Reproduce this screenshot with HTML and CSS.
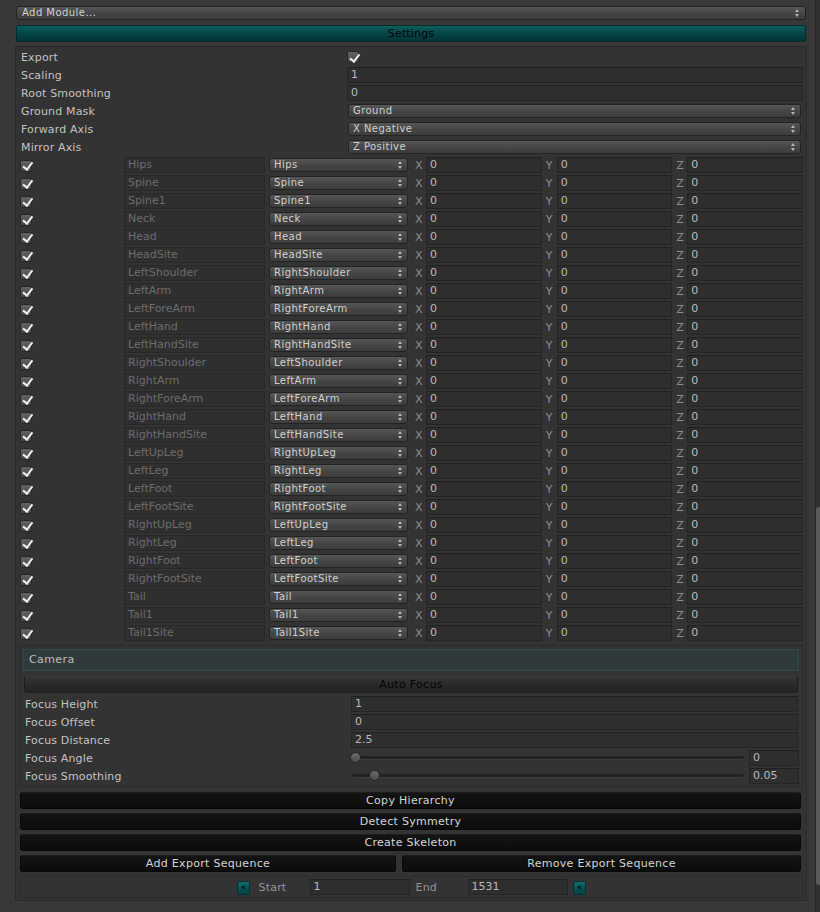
FILE: index.html
```html
<!DOCTYPE html>
<html>
<head>
<meta charset="utf-8">
<link rel="stylesheet" href="styles.css">
</head>
<body>
<div class="window">
  <div class="main">
    <div class="dd top">Add Module...</div>
    <div class="header">Settings</div>
    <div class="panel">
      <div class="prow"><span class="plabel">Export</span><span class="cb"></span></div>
      <div class="prow"><span class="plabel">Scaling</span><span class="field">1</span></div>
      <div class="prow"><span class="plabel">Root Smoothing</span><span class="field">0</span></div>
      <div class="prow"><span class="plabel">Ground Mask</span><span class="dd wide">Ground</span></div>
      <div class="prow"><span class="plabel">Forward Axis</span><span class="dd wide">X Negative</span></div>
      <div class="prow"><span class="plabel">Mirror Axis</span><span class="dd wide">Z Positive</span></div>

      <div class="brow"><span class="cb"></span><span class="name">Hips</span><span class="dd sm">Hips</span><span class="axis x">X</span><span class="field">0</span><span class="axis">Y</span><span class="field">0</span><span class="axis">Z</span><span class="field">0</span></div>
      <div class="brow"><span class="cb"></span><span class="name">Spine</span><span class="dd sm">Spine</span><span class="axis x">X</span><span class="field">0</span><span class="axis">Y</span><span class="field">0</span><span class="axis">Z</span><span class="field">0</span></div>
      <div class="brow"><span class="cb"></span><span class="name">Spine1</span><span class="dd sm">Spine1</span><span class="axis x">X</span><span class="field">0</span><span class="axis">Y</span><span class="field">0</span><span class="axis">Z</span><span class="field">0</span></div>
      <div class="brow"><span class="cb"></span><span class="name">Neck</span><span class="dd sm">Neck</span><span class="axis x">X</span><span class="field">0</span><span class="axis">Y</span><span class="field">0</span><span class="axis">Z</span><span class="field">0</span></div>
      <div class="brow"><span class="cb"></span><span class="name">Head</span><span class="dd sm">Head</span><span class="axis x">X</span><span class="field">0</span><span class="axis">Y</span><span class="field">0</span><span class="axis">Z</span><span class="field">0</span></div>
      <div class="brow"><span class="cb"></span><span class="name">HeadSite</span><span class="dd sm">HeadSite</span><span class="axis x">X</span><span class="field">0</span><span class="axis">Y</span><span class="field">0</span><span class="axis">Z</span><span class="field">0</span></div>
      <div class="brow"><span class="cb"></span><span class="name">LeftShoulder</span><span class="dd sm">RightShoulder</span><span class="axis x">X</span><span class="field">0</span><span class="axis">Y</span><span class="field">0</span><span class="axis">Z</span><span class="field">0</span></div>
      <div class="brow"><span class="cb"></span><span class="name">LeftArm</span><span class="dd sm">RightArm</span><span class="axis x">X</span><span class="field">0</span><span class="axis">Y</span><span class="field">0</span><span class="axis">Z</span><span class="field">0</span></div>
      <div class="brow"><span class="cb"></span><span class="name">LeftForeArm</span><span class="dd sm">RightForeArm</span><span class="axis x">X</span><span class="field">0</span><span class="axis">Y</span><span class="field">0</span><span class="axis">Z</span><span class="field">0</span></div>
      <div class="brow"><span class="cb"></span><span class="name">LeftHand</span><span class="dd sm">RightHand</span><span class="axis x">X</span><span class="field">0</span><span class="axis">Y</span><span class="field">0</span><span class="axis">Z</span><span class="field">0</span></div>
      <div class="brow"><span class="cb"></span><span class="name">LeftHandSite</span><span class="dd sm">RightHandSite</span><span class="axis x">X</span><span class="field">0</span><span class="axis">Y</span><span class="field">0</span><span class="axis">Z</span><span class="field">0</span></div>
      <div class="brow"><span class="cb"></span><span class="name">RightShoulder</span><span class="dd sm">LeftShoulder</span><span class="axis x">X</span><span class="field">0</span><span class="axis">Y</span><span class="field">0</span><span class="axis">Z</span><span class="field">0</span></div>
      <div class="brow"><span class="cb"></span><span class="name">RightArm</span><span class="dd sm">LeftArm</span><span class="axis x">X</span><span class="field">0</span><span class="axis">Y</span><span class="field">0</span><span class="axis">Z</span><span class="field">0</span></div>
      <div class="brow"><span class="cb"></span><span class="name">RightForeArm</span><span class="dd sm">LeftForeArm</span><span class="axis x">X</span><span class="field">0</span><span class="axis">Y</span><span class="field">0</span><span class="axis">Z</span><span class="field">0</span></div>
      <div class="brow"><span class="cb"></span><span class="name">RightHand</span><span class="dd sm">LeftHand</span><span class="axis x">X</span><span class="field">0</span><span class="axis">Y</span><span class="field">0</span><span class="axis">Z</span><span class="field">0</span></div>
      <div class="brow"><span class="cb"></span><span class="name">RightHandSite</span><span class="dd sm">LeftHandSite</span><span class="axis x">X</span><span class="field">0</span><span class="axis">Y</span><span class="field">0</span><span class="axis">Z</span><span class="field">0</span></div>
      <div class="brow"><span class="cb"></span><span class="name">LeftUpLeg</span><span class="dd sm">RightUpLeg</span><span class="axis x">X</span><span class="field">0</span><span class="axis">Y</span><span class="field">0</span><span class="axis">Z</span><span class="field">0</span></div>
      <div class="brow"><span class="cb"></span><span class="name">LeftLeg</span><span class="dd sm">RightLeg</span><span class="axis x">X</span><span class="field">0</span><span class="axis">Y</span><span class="field">0</span><span class="axis">Z</span><span class="field">0</span></div>
      <div class="brow"><span class="cb"></span><span class="name">LeftFoot</span><span class="dd sm">RightFoot</span><span class="axis x">X</span><span class="field">0</span><span class="axis">Y</span><span class="field">0</span><span class="axis">Z</span><span class="field">0</span></div>
      <div class="brow"><span class="cb"></span><span class="name">LeftFootSite</span><span class="dd sm">RightFootSite</span><span class="axis x">X</span><span class="field">0</span><span class="axis">Y</span><span class="field">0</span><span class="axis">Z</span><span class="field">0</span></div>
      <div class="brow"><span class="cb"></span><span class="name">RightUpLeg</span><span class="dd sm">LeftUpLeg</span><span class="axis x">X</span><span class="field">0</span><span class="axis">Y</span><span class="field">0</span><span class="axis">Z</span><span class="field">0</span></div>
      <div class="brow"><span class="cb"></span><span class="name">RightLeg</span><span class="dd sm">LeftLeg</span><span class="axis x">X</span><span class="field">0</span><span class="axis">Y</span><span class="field">0</span><span class="axis">Z</span><span class="field">0</span></div>
      <div class="brow"><span class="cb"></span><span class="name">RightFoot</span><span class="dd sm">LeftFoot</span><span class="axis x">X</span><span class="field">0</span><span class="axis">Y</span><span class="field">0</span><span class="axis">Z</span><span class="field">0</span></div>
      <div class="brow"><span class="cb"></span><span class="name">RightFootSite</span><span class="dd sm">LeftFootSite</span><span class="axis x">X</span><span class="field">0</span><span class="axis">Y</span><span class="field">0</span><span class="axis">Z</span><span class="field">0</span></div>
      <div class="brow"><span class="cb"></span><span class="name">Tail</span><span class="dd sm">Tail</span><span class="axis x">X</span><span class="field">0</span><span class="axis">Y</span><span class="field">0</span><span class="axis">Z</span><span class="field">0</span></div>
      <div class="brow"><span class="cb"></span><span class="name">Tail1</span><span class="dd sm">Tail1</span><span class="axis x">X</span><span class="field">0</span><span class="axis">Y</span><span class="field">0</span><span class="axis">Z</span><span class="field">0</span></div>
      <div class="brow"><span class="cb"></span><span class="name">Tail1Site</span><span class="dd sm">Tail1Site</span><span class="axis x">X</span><span class="field">0</span><span class="axis">Y</span><span class="field">0</span><span class="axis">Z</span><span class="field">0</span></div>

      <div class="cambox">
        <div class="camhead">Camera</div>
        <div class="autobtn">Auto Focus</div>
        <div class="crows">
          <div class="crow"><span class="clabel">Focus Height</span><span class="field">1</span></div>
          <div class="crow"><span class="clabel">Focus Offset</span><span class="field">0</span></div>
          <div class="crow"><span class="clabel">Focus Distance</span><span class="field">2.5</span></div>
          <div class="crow"><span class="clabel">Focus Angle</span>
            <span class="slider"><span class="track"><span class="knob" style="left:-1px"></span></span><span class="field val">0</span></span>
          </div>
          <div class="crow"><span class="clabel">Focus Smoothing</span>
            <span class="slider"><span class="track"><span class="knob" style="left:18px"></span></span><span class="field val">0.05</span></span>
          </div>
        </div>
      </div>

      <div class="btn first">Copy Hierarchy</div>
      <div class="btn">Detect Symmetry</div>
      <div class="btn">Create Skeleton</div>
      <div class="btnrow">
        <div class="btn inrow">Add Export Sequence</div>
        <div class="btn inrow">Remove Export Sequence</div>
      </div>
      <div class="rangebox">
        <span class="tealbtn"><svg width="4" height="5" viewBox="0 0 4 5"><path d="M0 2.5 L3.5 0 V5 Z" fill="#061818"/></svg></span>
        <span class="rlabel start">Start</span>
        <span class="field rfield">1</span>
        <span class="rlabel end">End</span>
        <span class="field rfield">1531</span>
        <span class="tealbtn last"><svg width="4" height="5" viewBox="0 0 4 5"><path d="M0 2.5 L3.5 0 V5 Z" fill="#061818"/></svg></span>
      </div>
    </div>
  </div>
  <div class="scrollbar"><div class="thumb"></div></div>
</div>
</body>
</html>
```

FILE: styles.css
```css
* { box-sizing: border-box; }
html, body { margin: 0; padding: 0; }
body {
  background: #383838;
  font-family: "DejaVu Sans", Verdana, sans-serif;
  font-size: 11px;
  color: #c3c3c3;
  width: 820px;
  height: 912px;
  overflow: hidden;
}
.window { display: flex; height: 912px; }
.main { flex: 1; padding: 6px 8px 0 15px; }
.scrollbar { width: 5px; border-left: 1px solid #262626; background: #313131; }
.thumb { margin-top: 507px; height: 378px; background: #5a5a5a; border-radius: 3px 0 0 3px; }

/* dropdown */
.dd {
  position: relative;
  display: block;
  height: 14px;
  border: 1px solid #232323;
  border-radius: 3px;
  background: linear-gradient(#575757, #474747 45%, #3d3d3d);
  color: #d0d0d0;
  font-size: 10px;
  line-height: 12px;
  letter-spacing: 0.45px;
  padding-left: 4px;
  white-space: nowrap;
  overflow: hidden;
}
.dd::before, .dd::after {
  content: "";
  position: absolute;
  right: 5px;
  width: 0; height: 0;
  border-left: 2.5px solid transparent;
  border-right: 2.5px solid transparent;
}
.dd::before { top: 2px; border-bottom: 3px solid #b5b5b5; }
.dd::after { top: 7px; border-top: 3px solid #b5b5b5; }
.dd.top { margin: 0 1px; padding-left: 5px; }
.dd.top::before, .dd.top::after { right: 6px; }
.dd.wide { margin: 0 2px 0 1px; }

.header {
  margin: 5px 1px 0;
  height: 17px;
  border: 1px solid #072c2c;
  border-radius: 2px;
  background: linear-gradient(#0c5e5e, #064545 50%, #033535);
  color: #050505;
  text-align: center;
  line-height: 15px;
  letter-spacing: 0.15px;
}

.panel {
  margin-top: 4px;
  border: 1px solid #2a2a2a;
  background: #333333;
  padding: 1px 0 2px;
}

.field {
  display: block;
  height: 16px;
  border: 1px solid #252525;
  border-top-color: #202020;
  background: #2e2e2e;
  color: #b9b9b9;
  line-height: 14px;
  padding-left: 3px;
  white-space: nowrap;
  overflow: hidden;
}

.cb {
  position: relative;
  display: block;
  width: 12px;
  height: 12px;
  border: 1px solid #262626;
  border-radius: 2px;
  background: linear-gradient(#626262, #484848);
}
.cb::after {
  content: "";
  position: absolute;
  left: 3.5px;
  top: -0.5px;
  width: 3.5px;
  height: 7.5px;
  border: solid #ececec;
  border-width: 0 2px 2px 0;
  transform: rotate(38deg);
}

.prow {
  display: grid;
  grid-template-columns: 326px 1fr;
  align-items: center;
  height: 18px;
  padding: 0 3px 0 5px;
}
.plabel { color: #c2c2c2; white-space: nowrap; letter-spacing: 0.15px; }

.brow {
  display: grid;
  grid-template-columns: 104px 141px 143px 18px 1fr 15px 1fr 15px 1fr;
  align-items: center;
  height: 18px;
  padding: 0 3px 0 4px;
}
.brow .cb { margin-top: 1px; }
.name {
  display: block;
  height: 16px;
  border: 1px solid #282828;
  background: #2f2f2f;
  color: #6c6c6c;
  line-height: 14px;
  padding-left: 3px;
  white-space: nowrap;
}
.brow .dd { margin-left: 4px; }
.axis { color: #8d8d8d; padding-left: 4px; }
.axis.x { padding-left: 7px; }

.cambox {
  margin: 3px 3px 0;
  border: 1px solid #2b2b2b;
  padding: 3px 3px 1px;
}
.camhead {
  height: 22px;
  border: 1px solid #2c4a4b;
  background: #313a3b;
  color: #bdbdbd;
  line-height: 20px;
  padding-left: 5px;
  letter-spacing: 0.4px;
}
.autobtn {
  margin: 5px 1px 0;
  height: 17px;
  border: 1px solid #1e1e1e;
  border-top-color: #3a3a3a;
  border-radius: 3px;
  background: linear-gradient(#353535, #2a2a2a 50%, #222222);
  color: #050505;
  text-align: center;
  line-height: 15px;
  letter-spacing: 0.3px;
}
.crows { margin-top: 2px; }
.crow {
  display: grid;
  grid-template-columns: 326px 1fr;
  align-items: center;
  height: 18px;
  padding: 0 1px 0 2px;
}
.clabel { color: #c2c2c2; white-space: nowrap; letter-spacing: 0.15px; }
.slider { display: flex; align-items: center; gap: 5px; }
.track {
  position: relative;
  flex: 1;
  height: 4px;
  border-radius: 2px;
  background: #222222;
  border-bottom: 1px solid #3d3d3d;
}
.knob {
  position: absolute;
  top: -4px;
  width: 11px;
  height: 11px;
  border-radius: 50%;
  border: 1px solid #262626;
  background: linear-gradient(#6b6b6b, #4b4b4b);
}
.field.val { width: 50px; margin-right: -1px; }

.btn {
  height: 17px;
  margin: 4px 5px 0 4px;
  border: 1px solid #080808;
  border-top-color: #1c1c1c;
  border-radius: 3px;
  background: linear-gradient(#141414, #0c0c0c);
  color: #d4d4d4;
  text-align: center;
  line-height: 15px;
  letter-spacing: 0.3px;
}
.btn.first { margin-top: 5px; }
.btnrow {
  display: grid;
  grid-template-columns: 376px 1fr;
  gap: 6px;
  margin: 4px 5px 0 4px;
}
.btn.inrow { margin: 0; }

.rangebox {
  margin: 4px 3px 0;
  height: 22px;
  border: 1px solid #2d2d2d;
  display: flex;
  justify-content: center;
  align-items: center;
}
.tealbtn {
  display: flex;
  align-items: center;
  justify-content: center;
  width: 13px;
  height: 14px;
  margin-top: 1px;
  border: 1px solid #053131;
  border-radius: 2px;
  background: linear-gradient(#0f6a6a, #085454 50%, #054444);
}
.rlabel { color: #959595; letter-spacing: 0.2px; }
.rlabel.start { width: 51px; margin-left: 9px; }
.rlabel.end { width: 52px; margin-left: 6px; }
.rfield { width: 100px; margin-top: -1px; }
.tealbtn.last { margin-left: 5px; }
```
